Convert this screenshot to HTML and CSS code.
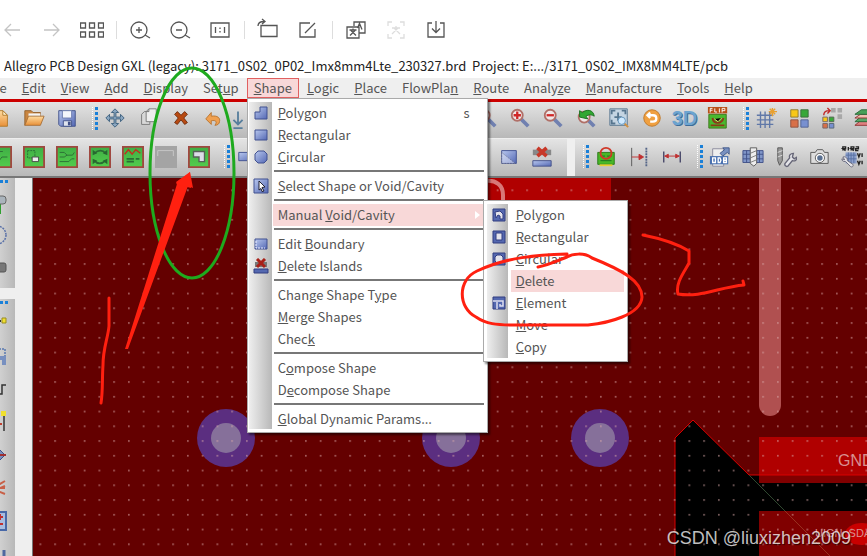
FILE: index.html
```
<!doctype html>
<html lang="en">
	<head>

		<meta charset="utf-8">
		<meta name="viewport" content="width=device-width, initial-scale=1">

		<title>Allegro PCB Design GXL</title>

		<link rel="stylesheet" href="styles.css">

	</head>
	<body>

		<!-- Image viewer bar -->
		<header class="viewer">
			<button class="viewer-btn faded" aria-label="Back"><svg viewBox="0 0 24 24"><path d="M20 12H5M11 6l-6 6 6 6"/></svg></button>
			<button class="viewer-btn faded" aria-label="Forward"><svg viewBox="0 0 24 24"><path d="M4 12h15M13 6l6 6-6 6"/></svg></button>
			<button class="viewer-btn" aria-label="Thumbnails"><svg viewBox="0 0 24 24"><path d="M.5 5h5v5h-5zM9.500 5h5v5h-5zM18.500 5h5v5h-5zM.5 14h5v5h-5zM9.500 14h5v5h-5zM18.500 14h5v5h-5z"/></svg></button>
			<span class="viewer-line"></span>
			<button class="viewer-btn" aria-label="Zoom in"><svg viewBox="0 0 24 24"><circle cx="11" cy="12" r="8"/><path d="M17 17l5 3M11 9v6M8 12h6"/></svg></button>
			<button class="viewer-btn" aria-label="Zoom out"><svg viewBox="0 0 24 24"><circle cx="11" cy="12" r="8"/><path d="M17 17l5 3M8 12h6"/></svg></button>
			<button class="viewer-btn" aria-label="Actual size"><svg viewBox="0 0 24 24"><path d="M3 5h18v14H3zM7.500 9v6M16.500 9v6M12 9.500v1.500M12 13v1.500"/></svg></button>
			<span class="viewer-line"></span>
			<button class="viewer-btn" aria-label="Rotate"><svg viewBox="0 0 24 24"><path d="M5 7.500h16v11H5zM2 8c0-3 2-4.500 6-4.500M6 1l3 2.500L6 6"/></svg></button>
			<button class="viewer-btn" aria-label="Edit"><svg viewBox="0 0 24 24"><path d="M14 5H4v14h15V11M9 15L19 5"/></svg></button>
			<span class="viewer-line"></span>
			<button class="viewer-btn" aria-label="Translate"><svg viewBox="0 0 24 24"><path d="M10 8V4h11v11h-6M3 9h12v11H3zM5.500 12h7M9 10.500V12M6 17.500l5-5M12 17.500l-5-5M13.500 10l2-4.500 2.500 6"/></svg></button>
			<button class="viewer-btn pale" aria-label="Recognise text"><svg viewBox="0 0 24 24"><path d="M8 4H4v4M16 4h4v4M4 16v4h4M20 16v4h-4M8 10h8M12 8v2M8 16l6-6M16 16l-6-6"/></svg></button>
			<button class="viewer-btn" aria-label="Save"><svg viewBox="0 0 24 24"><path d="M8 5H4v14h16V5h-4M12 3v11M8 10.500l4 4 4-4"/></svg></button>
		</header>

		<h1 class="title">Allegro PCB Design GXL (legacy): 3171_0S02_0P02_Imx8mm4Lte_230327.brd&nbsp; Project: E:.../3171_0S02_IMX8MM4LTE/pcb</h1>

		<nav class="menubar">
			<button class="menubar-item">File</button>
			<button class="menubar-item"><u>E</u>dit</button>
			<button class="menubar-item"><u>V</u>iew</button>
			<button class="menubar-item"><u>A</u>dd</button>
			<button class="menubar-item"><u>D</u>isplay</button>
			<button class="menubar-item">Set<u>u</u>p</button>
			<div class="menubar-open">
				<button class="menubar-item active"><u>S</u>hape</button>
				<div class="menu">
					<button class="menu-item"><span class="menu-icon"><svg viewBox="0 0 16 16"><path class="shape" d="M2 7h5V2h7v12H2z"/></svg></span><span><u>P</u>olygon</span><kbd>s</kbd></button>
					<button class="menu-item"><span class="menu-icon"><svg viewBox="0 0 16 16"><path class="shape" d="M2 3h12v10H2z"/></svg></span><span><u>R</u>ectangular</span></button>
					<button class="menu-item"><span class="menu-icon"><svg viewBox="0 0 16 16"><path class="shape" d="M5 2h6l3 3v6l-3 3H5l-3-3V5z"/></svg></span><span><u>C</u>ircular</span></button>
					<hr>
					<button class="menu-item"><span class="menu-icon"><svg viewBox="0 0 16 16"><path class="shape" d="M1 1h14v14H1z"/><path fill="#fff" stroke="#223" d="M6 3l6 6-3 .5 2 3.500-2 .5-1-3-2 1.500z"/></svg></span><span><u>S</u>elect Shape or Void/Cavity</span></button>
					<hr>
					<div class="menu-parent">
						<button class="menu-item current"><span class="menu-icon"></span><span>Manual <u>V</u>oid/Cavity</span><svg class="arrow" viewBox="0 0 5 8"><path d="M0 0l5 4-5 4z"/></svg></button>
						<div class="menu submenu">
							<button class="menu-item"><span class="menu-icon"><svg viewBox="0 0 16 16"><path class="solid" d="M2 2h12v12H2z"/><path class="void" d="M4 5l5-1 3 3v5H9V9L7 8l-2 3z"/></svg></span><span><u>P</u>olygon</span></button>
							<button class="menu-item"><span class="menu-icon"><svg viewBox="0 0 16 16"><path class="solid" d="M2 2h12v12H2z"/><path class="void" d="M5 4h6v7H5z"/></svg></span><span><u>R</u>ectangular</span></button>
							<button class="menu-item"><span class="menu-icon"><svg viewBox="0 0 16 16"><path class="solid" d="M2 2h12v12H2z"/><path class="void" d="M6 4h4l2 2v4l-2 2H6l-2-2V6z"/></svg></span><span><u>C</u>ircular</span></button>
							<button class="menu-item current"><span class="menu-icon"></span><span><u>D</u>elete</span></button>
							<button class="menu-item"><span class="menu-icon"><svg viewBox="0 0 16 16"><path class="solid" d="M2 2h12v12H2z"/><path fill="none" stroke="#dde" stroke-width="1.500" d="M2 6h10v5H9V9M6 7v7"/></svg></span><span><u>E</u>lement</span></button>
							<button class="menu-item"><span class="menu-icon"></span><span><u>M</u>ove</span></button>
							<button class="menu-item"><span class="menu-icon"></span><span><u>C</u>opy</span></button>
						</div>
					</div>
					<hr>
					<button class="menu-item"><span class="menu-icon"><svg viewBox="0 0 16 16"><path class="shape" d="M2 3h12v10H2z"/><path fill="none" stroke="#eef" stroke-dasharray="2 1" d="M3 5v7h9"/></svg></span><span>Edit <u>B</u>oundary</span></button>
					<button class="menu-item"><span class="menu-icon"><svg viewBox="0 0 16 16"><path fill="#777" d="M2 4h12v5H2z"/><path stroke="#a82018" stroke-width="3" d="M4 1l8 8M12 1L4 9"/><path class="solid" d="M1 11h14v4H1z"/></svg></span><span><u>D</u>elete Islands</span></button>
					<hr>
					<button class="menu-item"><span class="menu-icon"></span><span>Change Shape T<u>y</u>pe</span></button>
					<button class="menu-item"><span class="menu-icon"></span><span><u>M</u>erge Shapes</span></button>
					<button class="menu-item"><span class="menu-icon"></span><span>Chec<u>k</u></span></button>
					<hr>
					<button class="menu-item"><span class="menu-icon"></span><span>C<u>o</u>mpose Shape</span></button>
					<button class="menu-item"><span class="menu-icon"></span><span>D<u>e</u>compose Shape</span></button>
					<hr>
					<button class="menu-item"><span class="menu-icon"></span><span><u>G</u>lobal Dynamic Params...</span></button>
				</div>
			</div>
			<button class="menubar-item"><u>L</u>ogic</button>
			<button class="menubar-item"><u>P</u>lace</button>
			<button class="menubar-item">FlowPla<u>n</u></button>
			<button class="menubar-item"><u>R</u>oute</button>
			<button class="menubar-item">Analy<u>z</u>e</button>
			<button class="menubar-item"><u>M</u>anufacture</button>
			<button class="menubar-item"><u>T</u>ools</button>
			<button class="menubar-item"><u>H</u>elp</button>
		</nav>

		<!-- Gradients shared by the icons -->
		<svg class="defs" aria-hidden="true">
			<defs>
				<linearGradient id="blue" x1="0" y1="0" x2="1" y2="1"><stop offset="0" stop-color="#b9c8ee"/><stop offset="1" stop-color="#5468b4"/></linearGradient>
				<linearGradient id="green" x1="0" y1="0" x2="0" y2="1"><stop offset="0" stop-color="#3fae45"/><stop offset="1" stop-color="#52cc4c"/></linearGradient>
				<linearGradient id="orange" x1="0" y1="0" x2="0" y2="1"><stop offset="0" stop-color="#ffdca0"/><stop offset="1" stop-color="#e89038"/></linearGradient>
			</defs>
		</svg>

		<div class="toolbar">
			<button class="tool" aria-label="New"><svg viewBox="0 0 24 24"><path fill="url(#orange)" stroke="#b07828" d="M5 4h9l5 5v12H5z"/><path fill="#fff3d0" stroke="#b07828" d="M14 4v5h5z"/></svg></button>
			<button class="tool" aria-label="Open"><svg viewBox="0 0 24 24"><path fill="#c98540" stroke="#94602c" d="M2 20V4h7l2 2h8v5"/><path fill="#f4f4f4" d="M6 7h13v6H6z"/><path fill="url(#orange)" stroke="#a87038" d="M2 20L6 10h17l-4 10z"/></svg></button>
			<button class="tool" aria-label="Save"><svg viewBox="0 0 24 24"><path fill="url(#blue)" stroke="#405088" d="M3 4h18v17H5l-2-2z"/><path fill="#f4f6fc" stroke="#7080b0" d="M7 4h10v8H7z"/><path fill="#dfe4ee" stroke="#405088" d="M8 15h9v6H8z"/><path fill="#405088" d="M13 16h3v4h-3z"/></svg></button>
			<span class="grip"></span>
			<button class="tool" aria-label="Move"><svg viewBox="0 0 24 24"><path fill="#8aa6c0" stroke="#3e607e" d="M12 2l4 4h-3v5h5V8l4 4-4 4v-3h-5v5h3l-4 4-4-4h3v-5H6v3l-4-4 4-4v3h5V6H8z"/></svg></button>
			<button class="tool" aria-label="Copy"><svg viewBox="0 0 24 24"><path fill="#d8d8d8" stroke="#777" d="M5 8l3-3h6v14H5z"/><path fill="#eee" stroke="#777" d="M10 5l3-3h8v14H10zM10 5h3V2"/></svg></button>
			<button class="tool" aria-label="Delete"><svg viewBox="0 0 24 24"><path fill="#b84a12" stroke="#6e2c0c" d="M5 8l3-3 4 4 4-4 3 3-4 4 4 5-3 2-4-5-4 5-3-2 4-5z"/></svg></button>
			<button class="tool" aria-label="Undo"><svg viewBox="0 0 24 24"><path fill="#f0a050" stroke="#b87430" d="M9 6v4c7-1 10 2 9 6 0 2-2 4-5 4 3-4 1-6-4-5v4l-6-6z"/></svg></button>
			<button class="tool narrow" aria-label="Fix"><svg viewBox="0 0 24 24"><path fill="none" stroke="#577e9c" stroke-width="2" d="M12 5v13M7 14l5 5 5-5M7 23h10"/></svg></button>
			<span class="fold"></span>
			<button class="tool" aria-label="Zoom area"><svg viewBox="0 0 24 24"><path class="handle" d="M13 13l8 8"/><circle class="lens" cx="9" cy="9" r="6"/></svg></button>
			<button class="tool" aria-label="Zoom in"><svg viewBox="0 0 24 24"><path class="handle" d="M13 13l8 8"/><circle class="lens" cx="9" cy="9" r="6"/><path stroke="#d02828" stroke-width="2.500" d="M9 5v8M5 9h8"/></svg></button>
			<button class="tool" aria-label="Zoom out"><svg viewBox="0 0 24 24"><path class="handle" d="M13 13l8 8"/><circle class="lens" cx="9" cy="9" r="6"/><path stroke="#d02828" stroke-width="2.500" d="M5 9h8"/></svg></button>
			<button class="tool" aria-label="Zoom previous"><svg viewBox="0 0 24 24"><path class="handle" d="M14 14l7 7"/><circle class="lens" cx="10" cy="11" r="6"/><path fill="#32a832" stroke="#18701c" d="M5 11V4l3 2c5-4 12-3 13 4-3-2-6-2-9 0l2 3z"/></svg></button>
			<button class="tool" aria-label="Zoom fit"><svg viewBox="0 0 24 24"><path fill="#c4d4e2" stroke="#56758e" d="M2 2h19v18H2z"/><path stroke="#56758e" stroke-width="2" fill="none" d="M4 8V4h4M15 4h4v4M4 14v4h4M11 6v9M7 11h8"/><path stroke="#d09040" stroke-width="2" d="M18 18l4 4"/><circle cx="15" cy="15" r="4" fill="#d0eaff" stroke="#6090b8"/></svg></button>
			<button class="tool" aria-label="Redraw"><svg viewBox="0 0 24 24"><circle cx="12" cy="12" r="9" fill="#f0a040" stroke="#c07828"/><path fill="none" stroke="#fff" stroke-width="2.500" d="M8 9h5c5 0 5 7 0 7h-3M10 6L7 9l3 3"/></svg></button>
			<button class="tool three-d" aria-label="3D view">3D</button>
			<button class="tool" aria-label="Flip"><svg viewBox="0 0 24 24"><path fill="#49b82e" stroke="#3c7418" d="M2 8h19v15H2z"/><path fill="#b85018" d="M1 0h21v7H1z"/><path fill="none" stroke="#fff" d="M6 1.500H3.500V6M3.500 3.500H6M8.500 1.500V5.500H11M13.500 1.500v4.500M16.500 6V1.500h3V4h-3"/><path fill="none" stroke="#8c3a18" stroke-width="2" d="M6 12c1 7 10 7 12 0M4 20h15"/><path stroke="#ffe070" d="M8 13l4 3 4-4"/></svg></button>
			<span class="grip"></span>
			<button class="tool" aria-label="Grid"><svg viewBox="0 0 24 24"><path stroke="#6078a8" stroke-width="1.500" d="M6 5v18M11 5v18M16 5v18M2 9h18M2 14h18M2 19h18"/><path stroke="#e8a030" stroke-width="1.500" d="M19 1v9M15 5h9M16 2l6 6M22 2l-6 6"/></svg></button>
			<button class="tool" aria-label="Colours"><svg viewBox="0 0 24 24"><path fill="#f8c818" stroke="#8c7a30" d="M3 3h8v8H3z"/><path fill="#38a838" stroke="#3c6c3c" d="M14 3h8v8h-8z"/><path fill="#d87048" stroke="#8c5040" d="M3 14h8v8H3z"/><path fill="#7890d0" stroke="#506090" d="M14 14h8v8h-8z"/></svg></button>
			<button class="tool" aria-label="Swap colours"><svg viewBox="0 0 24 24"><path fill="#a8a8a8" d="M11 1h5v5h-5zM18 1h5v5h-5zM18 8h5v5h-5z"/><path fill="#f8c818" stroke="#766" d="M2 11h5v5H2z"/><path fill="#38a838" stroke="#565" d="M9 11h5v5H9z"/><path fill="#d87048" stroke="#766" d="M2 18h5v5H2z"/><path fill="#7890d0" stroke="#567" d="M9 18h5v5H9z"/><path fill="none" stroke="#c02828" stroke-width="1.500" d="M3 9c0-4 2-5 6-5M7 1l3 3-3 3"/></svg></button>
			<button class="tool" aria-label="Layers"><svg viewBox="0 0 24 24"><path fill="#e08080" stroke="#903030" d="M1 20l6-5h16v5z"/><path fill="#58a868" stroke="#286838" d="M1 16l6-5h16v5z"/><path fill="#f0c0b0" stroke="#903030" d="M1 12l6-4h16v4z"/><path fill="#48a058" stroke="#286838" d="M1 8l7-5h15v5z"/></svg></button>
		</div>

		<div class="toolbar lower">
			<button class="tool" aria-label="General edit mode"><svg viewBox="0 0 24 24"><path class="board" d="M1 1h22v22H1z"/><path class="trace" d="M4 16h6l3-4h6M4 6h10"/></svg></button>
			<button class="tool" aria-label="Placement mode"><svg viewBox="0 0 24 24"><path class="board" d="M1 1h22v22H1z"/><path class="trace" stroke-dasharray="2 1" d="M5 5h8v8H5z"/><path fill="#eee" stroke="#444" d="M10 12h7v5h-7z"/></svg></button>
			<button class="tool" aria-label="Etch edit mode"><svg viewBox="0 0 24 24"><path class="board" d="M1 1h22v22H1z"/><path class="trace" d="M4 7h5l3 3M4 12h5l3-2h6l2-3M4 17h10l3-3h3"/></svg></button>
			<button class="tool" aria-label="Flow planning mode"><svg viewBox="0 0 24 24"><path class="board" d="M1 1h22v22H1z"/><path class="trace" stroke-width="2" d="M6 8c4-4 9-4 12 0M18 16c-4 4-9 4-12 0"/><path fill="#286830" d="M4 10V4l5 4zM20 14v6l-5-4zM20 10V4l-5 4zM4 14v6l5-4z"/></svg></button>
			<button class="tool" aria-label="Signal integrity mode"><svg viewBox="0 0 24 24"><path class="board" d="M1 1h22v22H1z"/><path fill="none" stroke="#c03020" stroke-width="1.500" d="M3 9l4-5 4 5 4-5 5 4"/><path class="trace" stroke-width="2" d="M5 14h8M5 17h8M15 14h4"/></svg></button>
			<button class="tool" aria-label="IFP mode" disabled><svg viewBox="0 0 24 24"><path fill="#a4a4a4" d="M0 0h24v24H0z"/><path fill="none" stroke="#c8c8c8" d="M3 11V5h17v6"/></svg></button>
			<button class="tool" aria-label="Shape edit mode"><svg viewBox="0 0 24 24"><path class="board" d="M1 1h22v22H1z"/><path fill="#dcdce8" stroke="#586058" stroke-width="1.500" d="M6 6h12v11h-6v-5H6z"/></svg></button>
			<span class="grip"></span>
			<button class="tool" aria-label="Shape add"><svg viewBox="0 0 24 24"><path class="shape" d="M3 7h18v9H3z"/></svg></button>
			<span class="fold lower-fold"></span>
			<button class="tool" aria-label="Edit boundary"><svg viewBox="0 0 24 24"><path class="shape" d="M4 5h16v14H4z"/><path fill="#e8ecf8" stroke="#667" stroke-dasharray="2 1" d="M4 7v12h15z" opacity=".5"/></svg></button>
			<button class="tool" aria-label="Delete islands"><svg viewBox="0 0 24 24"><path fill="#888" d="M2 4h20v6H2z"/><path stroke="#c83828" stroke-width="4" d="M7 2l10 9M17 2L7 11"/><path fill="url(#blue)" stroke="#445088" d="M2 16h20v6H2z"/></svg></button>
			<span class="gutter"></span>
			<span class="grip"></span>
			<button class="tool" aria-label="Check"><svg viewBox="0 0 24 24"><path fill="#48b828" stroke="#287818" d="M3 7h18v13H3z"/><path fill="#e8d030" d="M5 20h14v2H5z"/><path fill="none" stroke="#1c6c20" d="M6 11h5M13 11h5M6 16h12"/><circle cx="12" cy="8" r="6" fill="none" stroke="#d03828" stroke-width="2"/></svg></button>
			<button class="tool" aria-label="Measure to edge"><svg viewBox="0 0 24 24"><path stroke="#555" d="M4 2v20"/><path stroke="#568" stroke-width="2" stroke-dasharray="2 1" d="M20 2v20"/><path fill="#c03030" stroke="#c03030" d="M4 12h8V9l5 3-5 3v-3"/></svg></button>
			<button class="tool" aria-label="Dimension"><svg viewBox="0 0 24 24"><path stroke="#446" stroke-width="1.500" d="M3 6v12M21 6v12"/><path fill="#c03030" stroke="#c03030" d="M4 11l4-2v4zM20 11l-4-2v4zM8 11h8"/></svg></button>
			<span class="grip"></span>
			<button class="tool" aria-label="ODB export"><svg viewBox="0 0 24 24"><path fill="#eee" stroke="#889" d="M4 3h12v19H4z"/><path fill="#4870b0" d="M1 11h20v9H1z"/><path fill="none" stroke="#fff" stroke-width="1.500" d="M4 13h3v5H4zM10 13h2l1 2.500-1 2.500h-2zM16 13h3v5h-3zM16 15.500h3"/><path fill="#7890c0" stroke="#405888" d="M12 8l5-4-2-2h7v7l-2-2-5 4z"/></svg></button>
			<button class="tool" aria-label="Cross section"><svg viewBox="0 0 24 24"><path fill="#8096c8" stroke="#405088" d="M1 5h22v13H1z"/><path stroke="#405088" d="M1 9h22M1 14h22M5 5v13M19 5v13"/><path fill="#eee" stroke="#555" d="M9 2h7v17l-3 3-4-3z"/><path stroke="#777" d="M9 8l7-3M9 13l7-3M9 18l7-3"/></svg></button>
			<button class="tool" aria-label="Drill tools"><svg viewBox="0 0 24 24"><path fill="#999" stroke="#555" d="M3 2h5v14l-3 5-2-5z"/><path stroke="#ddd" d="M3 7l5-2M3 12l5-2"/><path fill="#e4e4e8" stroke="#667" stroke-width="1.500" d="M11 19l5-6c-1-3 1-5 4-5l-1 4 2 2 3-2c0 3-2 5-5 4l-5 6c-2 1-4-1-3-3z"/></svg></button>
			<button class="tool" aria-label="Snapshot"><svg viewBox="0 0 24 24"><path fill="#ddd" stroke="#555" d="M3 7h5l2-3h6l2 3h4v12H3z"/><circle cx="13" cy="13" r="5" fill="#fff" stroke="#555"/><circle cx="13" cy="13" r="3" fill="#5a7090"/></svg></button>
			<button class="tool" aria-label="Rename"><svg viewBox="0 0 24 24"><path fill="#8ca0cc" d="M5 7h12v12H5z"/><path stroke="#5870a0" d="M8 7v12M11 7v12M14 7v12M5 10h12M5 14h12"/><path fill="none" stroke="#222" stroke-width="1.500" d="M2 5V1h3v2H2l3 2M8 1v4M11 5V1h3v2h-3l3 2M16 1h3v2h-3v2h3M18 8l1.500 4L21 8M23 8v4M18 16l1.500 4 1.500-4M23 16v4"/><path fill="#e4e4e8" stroke="#667" d="M2 12c3-1 5 1 5 4l6 4c1 2-1 4-3 2l-5-5c-3 0-4-1-4-3l3 1z"/></svg></button>
			<button class="tool" aria-label="Report"><svg viewBox="0 0 24 24"><path fill="#eee" stroke="#555" d="M3 2h17v18H3z"/></svg></button>
		</div>

		<main class="workspace">

			<aside class="sidebar">
				<div class="side-group">
					<button class="side-tool" aria-label="Place pin"><svg viewBox="0 0 24 24"><path stroke="#30a030" stroke-width="2" d="M14 14v10"/><rect x="2" y="6" width="18" height="8" rx="3" fill="#aab4bc" stroke="#666"/></svg></button>
					<button class="side-tool" aria-label="Place circle"><svg viewBox="0 0 24 24"><circle cx="11" cy="12" r="9" fill="none" stroke="#5870a8" stroke-width="1.500" stroke-dasharray="2 1"/></svg></button>
					<button class="side-tool" aria-label="Place part"><svg viewBox="0 0 24 24"><rect x="2" y="7" width="18" height="9" rx="2" fill="#777" stroke="#555"/></svg></button>
				</div>
				<div class="side-group">
					<button class="side-tool" aria-label="Add connect"><svg viewBox="0 0 24 24"><path stroke="#333" stroke-width="2" d="M3 10h12"/><path fill="#f0e030" stroke="#998c20" d="M16 7h4v5h-4z"/></svg></button>
					<button class="side-tool" aria-label="Slide"><svg viewBox="0 0 24 24"><path fill="none" stroke="#5878b0" stroke-width="1.500" stroke-dasharray="2 1" d="M4 5h15v7"/><path fill="#7890c0" d="M8 12h12v9h-4v-5H8z"/></svg></button>
					<button class="side-tool" aria-label="Delay tune"><svg viewBox="0 0 24 24"><path fill="none" stroke="#333" stroke-width="1.500" d="M10 17h6V8h4"/></svg></button>
					<button class="side-tool" aria-label="Custom smooth"><svg viewBox="0 0 24 24"><path fill="#f0e030" d="M15 1h5v5h-5z"/><path stroke="#333" stroke-width="1.500" d="M18 6v15"/><path stroke="#c04030" stroke-width="2" d="M10 14h6"/></svg></button>
					<button class="side-tool" aria-label="Vertex"><svg viewBox="0 0 24 24"><path fill="#7890c0" stroke="#405088" d="M11 4l8 8-8 8-8-8z"/><path stroke="#a03030" stroke-width="2" d="M9 12h11"/></svg></button>
					<button class="side-tool" aria-label="Create fanout"><svg viewBox="0 0 24 24"><path fill="none" stroke="#c86048" stroke-width="2" d="M8 8h6l5-3M8 12h6l5-2M8 12h11M8 16h6l5 2"/></svg></button>
					<button class="side-tool" aria-label="Route by pick"><svg viewBox="0 0 24 24"><path fill="#a8bce0" stroke="#4868a8" stroke-width="2" d="M4 3h16v18H4z"/><path stroke="#c03030" stroke-width="2" d="M11 8h6M11 15h6M14 5v6"/></svg></button>
					<button class="side-tool" aria-label="Bus route"><svg viewBox="0 0 24 24"><path stroke="#5068a0" stroke-width="3" d="M12 8v14M18 8v14"/></svg></button>
				</div>
			</aside>

			<!-- Board artwork -->
			<svg class="board-view" viewBox="33 178 834 378" preserveAspectRatio="xMinYMin slice">
				<defs>
					<pattern id="dots" x="32.600" y="182.500" width="14.750" height="14.750" patternUnits="userSpaceOnUse"><path fill="#d8a8a8" opacity=".65" d="M7 7h1.500v1.500H7z"/></pattern>
				</defs>
				<path fill="#640000" d="M33 178h834v378H33z"/>
				<path fill="#b00000" d="M480 178h131v44H480z"/>
				<path fill="none" stroke="#d87878" stroke-width="4" d="M486 181c10-1 17 4 17 14v8"/>
				<path fill="#000" d="M675 556V438l18-18 56 55h118v81z"/>
				<path fill="#800000" d="M759 475h108v8H759zM759 511h108v45H759z"/>
				<path fill="#b00000" d="M759 437h108v38H759z"/>
				<ellipse cx="862" cy="534" rx="17" ry="11" fill="#c80000"/>
				<path fill="none" stroke="#d80000" d="M675 556V438l18-18 56 55h118"/>
				<path stroke="#304830" d="M749 475l36 36"/>
				<path stroke="#983020" d="M785 511l45 45"/>
				<path fill="#b05050" d="M759 178h22v227a11 11 0 0 1-22 0z"/>
				<g fill="#5b2e80"><circle cx="226" cy="438" r="29"/><circle cx="451" cy="438" r="29"/><circle cx="600" cy="438" r="29"/></g>
				<g fill="#86709a"><circle cx="226" cy="438" r="15"/><circle cx="451" cy="438" r="15"/><circle cx="600" cy="438" r="15"/></g>
				<path fill="url(#dots)" d="M33 178h834v378H33z"/>
				<text class="net" x="838" y="466" font-size="16">GND</text>
				<text class="net" x="815" y="537" font-size="11">UIGN_SDA</text>
			</svg>

		</main>

		<!-- Pen marks over the window -->
		<svg class="marks" viewBox="0 0 867 556" preserveAspectRatio="xMinYMin slice" aria-hidden="true">
			<ellipse cx="192" cy="173" rx="42" ry="105" stroke="#1eaa1e" stroke-width="3"/>
			<path fill="#ff2010" stroke="none" d="M125 349l52-165-1-2 14-10 3 16-5-2-60 163z"/>
			<path fill="#ff2010" stroke="none" d="M190 172l-14 12 15 4z"/>
			<path stroke-width="3" d="M109 298v28c-1 12-6 22-6 39-1 14 0 26-2 38"/>
			<path stroke-width="3" d="M567 254c-30 1-60 3-90 17-20 9-19 37-1 46 10 7 20 8 40 8h72c20-2 53-10 54-28 0-16-20-27-50-39-8-6-20-4-25-1-10 4-18 8-29 10"/>
			<path stroke-width="3" d="M643 235c15 3 33 8 46 16v12c-4 8-14 20-11 31 22 4 42-7 66-9l-1-4"/>
		</svg>

		<div class="watermark">CSDN @liuxizhen2009</div>

	</body>
</html>
```
FILE: styles.css
```
/* -------------------------------------------------- */

:root
{
	--chrome: #efefef;
	--text: #555;
	--line: #cc0000;
	--hover: #f8d8d8;
	--grip: #1a80d8;
}

/* -------------------------------------------------- */

*, *::before, *::after { box-sizing: border-box; }

body
{
	position: relative;

	display: flex;
	flex-flow: column nowrap;

	height: 100vh;
	margin: 0;
	overflow: hidden;

	font-family: "Noto Sans CJK SC" , "Noto Sans" , sans-serif;
	font-size: 13px;
	line-height: 20px;

	background: white;
	color: var( --text );
}

button
{
	padding: 0;

	font: inherit;
	color: inherit;

	border: none;
	background: none;
}

svg { display: block; }

.defs
{
	position: absolute;
	width: 0;
	height: 0;
}

/* -------------------------------------------------- */

.viewer
{
	flex: none;
	display: flex;
	align-items: center;

	height: 56px;
	padding-top: 4px;
}

.viewer-btn
{
	width: 24px;
	margin-right: 16px;
}

.viewer-btn svg
{
	width: 24px;
	height: 24px;

	fill: none;
	stroke: #555;
	stroke-width: 1.3;
}

.viewer-btn.faded svg { stroke: #c4c4c4; }
.viewer-btn.pale svg { stroke: #ddd; }

.viewer-line
{
	width: 1px;
	height: 18px;
	margin: 0 11px 0 -4px;

	background: #ddd;
}

/* -------------------------------------------------- */

.title
{
	flex: none;
	height: 22px;
	margin: 0;
	padding-left: 4px;

	font-size: 13px;
	font-weight: 400;

	white-space: nowrap;
	color: #222;
}

/* -------------------------------------------------- */

.menubar
{
	flex: none;
	display: flex;
	gap: 1px;

	height: 24px;
	padding-bottom: 1px;

	background: var( --chrome );
	border-bottom: 3px solid var( --line );
}

.menubar-item
{
	flex: none;
	height: 20px;
	padding: 0 6px;

	line-height: 18px;

	border: 1px solid transparent;
}

.menubar > :first-child { margin-left: -22px; }

.menubar-item.active
{
	background: var( --hover );
	border-color: #e06060;
}

.menubar-open { position: relative; }

/* -------------------------------------------------- */

.menu
{
	position: absolute;
	z-index: 2;
	top: 20px;
	left: 0;

	width: 241px;
	padding: 3px 3px 2px 1px;

	background:
		linear-gradient( to right , #eee , #b8b8b8 ) 1px 3px / 23px calc( 100% - 6px ) no-repeat,
		white;
	border: 1px solid #aaa;
	box-shadow: 2px 2px 2px rgba( 0,0,0 , 0.5 );
}

.menu-item
{
	position: relative;

	display: flex;
	align-items: center;

	width: 100%;
	height: 22px;

	text-align: left;
	white-space: nowrap;
}

.menu-icon
{
	flex: none;
	width: 23px;
	height: 22px;
	margin-right: 6px;
	padding: 3px 4px;
}

.menu-icon svg
{
	width: 16px;
	height: 16px;
}

.menu-item.current { background: linear-gradient( var( --hover ) , var( --hover ) ) 24px 0 no-repeat; }

.menu-item kbd
{
	margin-left: auto;
	padding-right: 14px;

	font: inherit;
}

.menu-item .arrow
{
	width: 5px;
	height: 8px;
	margin: 0 4px 0 auto;

	fill: white;
}

.menu hr
{
	height: 2px;
	margin: 2px 0 3px 25px;

	border: none;
	background: #777;
}

.menu-parent { position: relative; }

.submenu
{
	top: -4px;
	left: 234px;

	width: 145px;
	padding: 3px;

	background:
		linear-gradient( to right , #eee , #b8b8b8 ) 3px 3px / 21px calc( 100% - 6px ) no-repeat,
		white;
}

/* -------------------------------------------------- */

.shape
{
	fill: url( #blue );
	stroke: #405090;
}

.solid
{
	fill: #5468b0;
	stroke: #303c80;
}

.void
{
	fill: #e4e4ec;
	stroke: #303c80;
}

.board
{
	fill: url( #green );
	stroke: #a04840;
	stroke-width: 2;
}

.trace
{
	fill: none;
	stroke: #2c6c34;
}

.lens
{
	fill: #f0e8e8;
	stroke: #b07068;
	stroke-width: 2;
}

.handle
{
	stroke: #7080b0;
	stroke-width: 4;
}

/* -------------------------------------------------- */

.toolbar
{
	flex: none;
	display: flex;
	align-items: center;

	height: 36px;
	padding-bottom: 4px;
	overflow: hidden;

	background: linear-gradient( #e4e4e4 , #b8b8b8 );
}

.toolbar.lower
{
	height: 40px;
	padding-bottom: 2px;

	border-top: 1px solid #eee;
	border-bottom: 2px solid #777;
}

.tool
{
	flex: none;
	display: flex;
	justify-content: center;

	width: 33px;
}

.tool:first-child { margin-left: -16px; }

.tool.narrow { width: 16px; }

.tool svg
{
	flex: none;
	width: 22px;
	height: 22px;
}

.tool.three-d
{
	font-family: "Liberation Sans" , sans-serif;
	font-size: 20px;
	font-weight: bold;

	color: #6ca4d0;
	text-shadow: 1px 1px 0 #3c6c98;
}

.fold
{
	flex: none;
	width: 224px;
}

.fold.lower-fold { width: 229px; }

.gutter
{
	flex: none;
	align-self: stretch;
	width: 8px;
	margin: 0 -9px -2px 9px;

	background: var( --chrome );
}

.gutter + .grip { margin-left: 8px; }

.grip
{
	flex: none;
	width: 15px;
	height: 23px;

	background:
		repeating-linear-gradient( var( --grip ) 0 3px , transparent 3px 5px ) 12px 0 / 3px 100% no-repeat,
		repeating-linear-gradient( white 0 1px , transparent 1px 2px ) 9px 0 / 1px 100% no-repeat;
}

/* -------------------------------------------------- */

.workspace
{
	flex: 1;
	display: flex;
	min-height: 0;

	background: var( --chrome );
}

.sidebar
{
	flex: none;
	display: flex;
	flex-flow: column nowrap;
	gap: 11px;

	width: 32px;
}

.side-group
{
	flex: none;
	width: 15px;
	padding: 7px 0 4px;
	overflow: hidden;

	background:
		repeating-linear-gradient( to right , var( --grip ) 0 3px , transparent 3px 5px ) 0 2px / 9px 3px no-repeat,
		linear-gradient( to right , #d0d0d0 , #b8b8b8 );
}

.side-tool
{
	display: block;
	height: 33px;
	margin-left: -14px;
}

.side-tool svg
{
	width: 24px;
	height: 24px;
}

.board-view
{
	flex: 1;
	min-width: 0;
	height: 100%;

	border-left: 1px solid #777;
}

.net
{
	font-family: "Liberation Sans" , sans-serif;
	fill: #d89090;
}

/* -------------------------------------------------- */

.marks
{
	position: absolute;
	z-index: 3;
	top: 0;
	left: 0;

	width: 100%;
	height: 100%;

	fill: none;
	stroke: #ff2010;
	stroke-linecap: round;
	stroke-linejoin: round;

	pointer-events: none;
}

.watermark
{
	position: absolute;
	z-index: 3;
	right: 16px;
	bottom: 8px;

	font-family: "Liberation Sans" , sans-serif;
	font-size: 18px;

	color: rgba( 255,255,255 , 0.75 );
	text-shadow: 1px 1px 1px rgba( 0,0,0 , 0.6 );
}
```
